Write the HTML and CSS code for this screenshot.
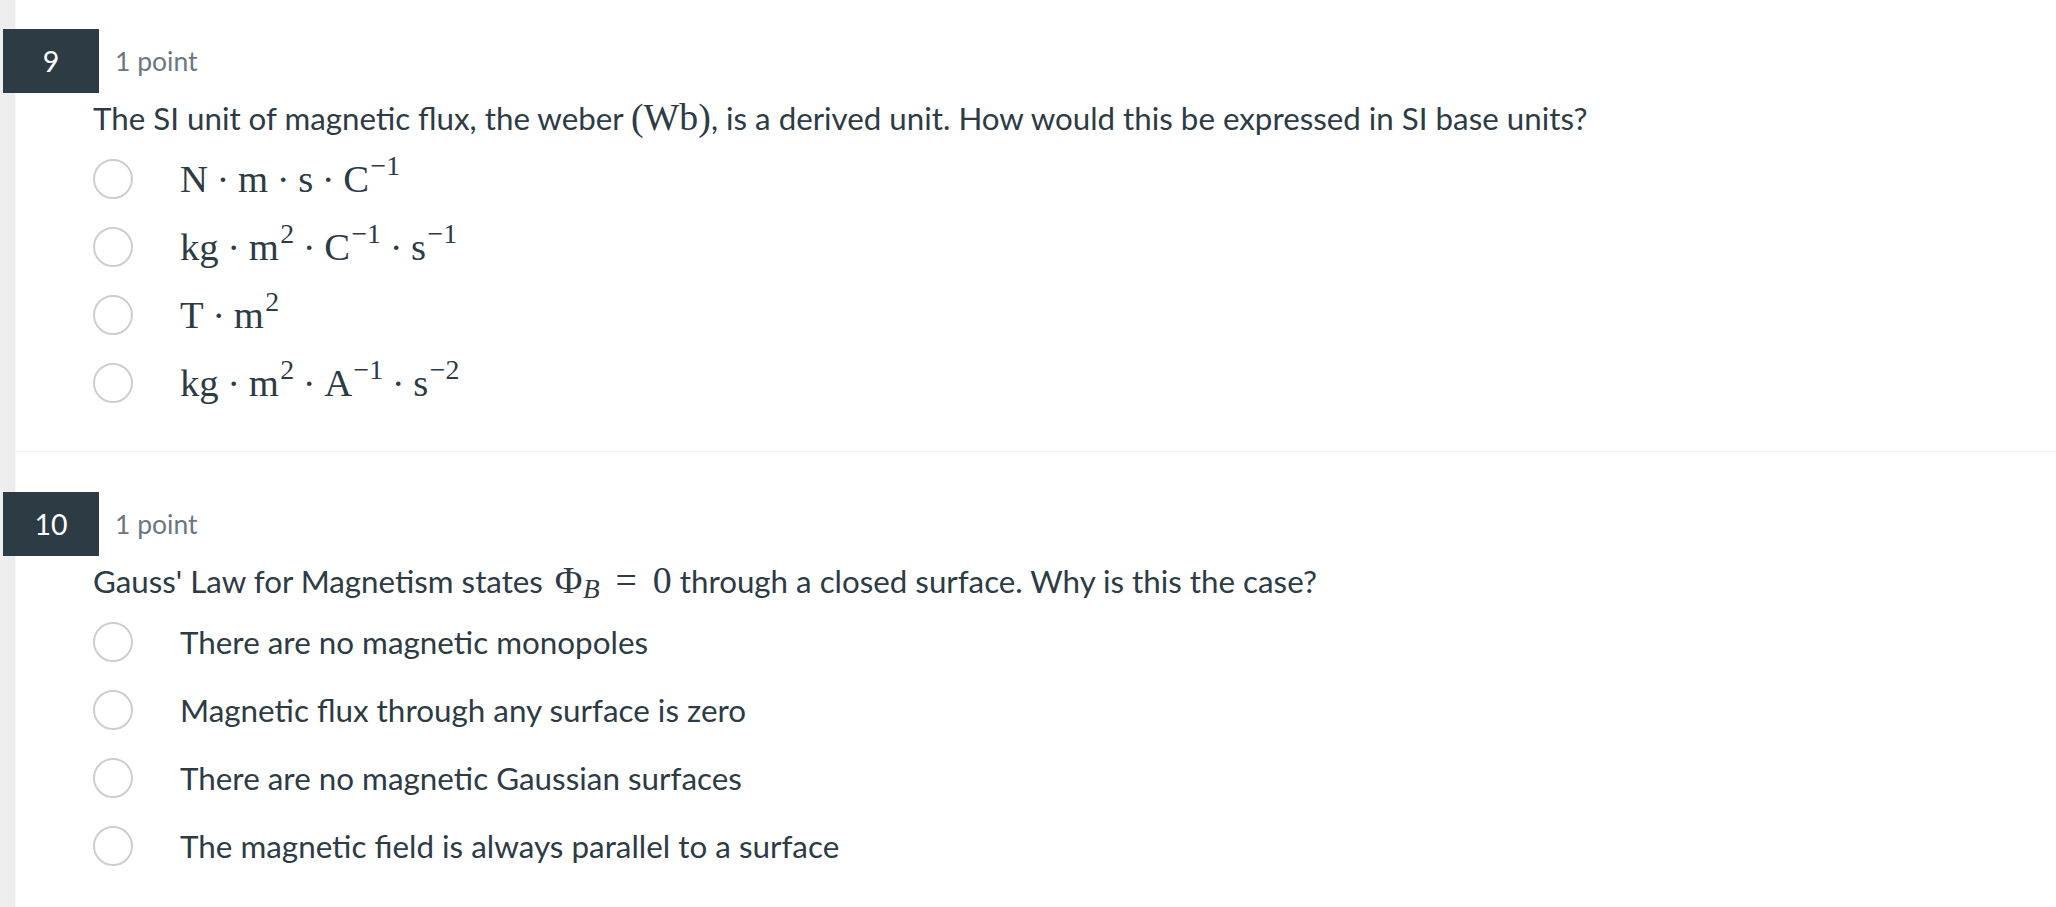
FILE: index.html
```html
<!DOCTYPE html>
<html lang="en">
<head>
<meta charset="utf-8">
<title>Quiz</title>
<link rel="stylesheet" href="styles.css">
</head>
<body>
<main class="page">
  <section class="question">
    <div class="q-header">
      <div class="q-num">9</div>
      <div class="q-points">1 point</div>
    </div>
    <div class="q-body">
      <p class="q-text">The SI unit of magnetic flux, the weber <span class="math inline">(Wb)</span>, is a derived unit. How would this be expressed in SI base units?</p>
      <ul class="options">
        <li class="option"><span class="radio"></span><span class="math opt-math">N<span class="op">·</span>m<span class="op">·</span>s<span class="op">·</span>C<sup>−1</sup></span></li>
        <li class="option"><span class="radio"></span><span class="math opt-math">kg<span class="op">·</span>m<sup>2</sup><span class="op">·</span>C<sup>−1</sup><span class="op">·</span>s<sup>−1</sup></span></li>
        <li class="option"><span class="radio"></span><span class="math opt-math">T<span class="op">·</span>m<sup>2</sup></span></li>
        <li class="option"><span class="radio"></span><span class="math opt-math">kg<span class="op">·</span>m<sup>2</sup><span class="op">·</span>A<sup>−1</sup><span class="op">·</span>s<sup>−2</sup></span></li>
      </ul>
    </div>
  </section>
  <section class="question">
    <div class="q-header">
      <div class="q-num">10</div>
      <div class="q-points">1 point</div>
    </div>
    <div class="q-body">
      <p class="q-text">Gauss' Law for Magnetism states <span class="math inline eq">Φ<sub>B</sub><span class="rel">=</span>0</span> through a closed surface. Why is this the case?</p>
      <ul class="options">
        <li class="option"><span class="radio"></span><span class="opt-text">There are no magnetic monopoles</span></li>
        <li class="option"><span class="radio"></span><span class="opt-text">Magnetic flux through any surface is zero</span></li>
        <li class="option"><span class="radio"></span><span class="opt-text">There are no magnetic Gaussian surfaces</span></li>
        <li class="option"><span class="radio"></span><span class="opt-text">The magnetic field is always parallel to a surface</span></li>
      </ul>
    </div>
  </section>
</main>
</body>
</html>
```

FILE: styles.css
```css
html, body {
  margin: 0;
  padding: 0;
}
body {
  background: linear-gradient(to right, #efefef 0, #ececec 15px, #fff 16px);
  font-family: Lato, "Open Sans", sans-serif;
  color: #2d3b45;
  min-height: 907px;
}
.page {
  margin-left: 16px;
}
.question {
  padding-top: 29px;
  padding-bottom: 34px;
  border-bottom: 1px solid #efefef;
}
.question + .question {
  padding-top: 40px;
  border-bottom: none;
}
.q-header {
  display: flex;
  align-items: center;
  height: 64px;
}
.q-num {
  margin-left: -13px;
  width: 96px;
  height: 64px;
  background: #2d3b45;
  color: #fff;
  font-size: 28.5px;
  display: flex;
  align-items: center;
  justify-content: center;
}
.q-points {
  margin-left: 16px;
  font-size: 26.5px;
  color: #6b7780;
}
.q-body {
  padding-left: 77px;
}
.q-text {
  margin: 0;
  font-size: 31.3px;
  line-height: 48px;
  white-space: nowrap;
}
.options {
  list-style: none;
  margin: 3px 0 0;
  padding: 0;
}
.option {
  display: flex;
  align-items: center;
  height: 68px;
}
.radio {
  box-sizing: border-box;
  width: 40px;
  height: 40px;
  border: 2px solid #cbcfd2;
  border-radius: 50%;
  flex: none;
  margin-right: 47px;
}
.opt-text {
  font-size: 31.4px;
  line-height: 48px;
}
.math {
  font-family: "Liberation Serif", "DejaVu Serif", serif;
}
.math.inline {
  font-size: 1.21em;
}
.math.eq {
  margin-left: 0.1em;
}
.opt-math {
  font-size: 38.7px;
  line-height: 48px;
}
.op {
  margin: 0 0.222em;
}
.rel {
  margin: 0 0.42em;
}
sup {
  font-size: 0.72em;
  vertical-align: 0.62em;
  line-height: 0;
  margin-left: 0.05em;
}
sub {
  font-size: 0.72em;
  font-style: italic;
  vertical-align: -0.2em;
  line-height: 0;
  margin-left: 0.02em;
}
```
